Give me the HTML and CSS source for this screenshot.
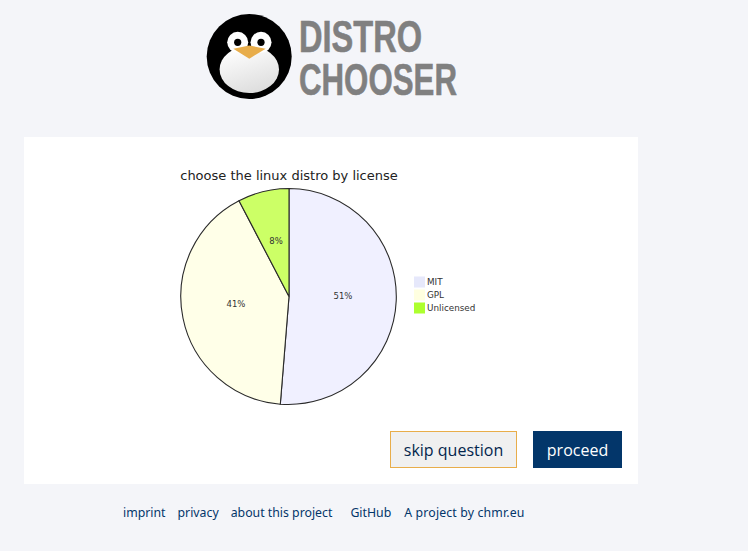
FILE: index.html
```html
<!DOCTYPE html>
<html lang="en">
<head>
    <meta charset="UTF-8">
    <title>Distro Chooser</title>
    <link rel="stylesheet" href="styles.css">
</head>
<body>
    <div class="page">
        <header class="logo-row">
            <div class="logo">
                <svg class="logo-icon" viewBox="0 0 98 100" width="98" height="100">
                    <defs>
                        <linearGradient id="belly" x1="0.3" y1="0" x2="0.7" y2="1">
                            <stop offset="0" stop-color="#ffffff"/>
                            <stop offset="1" stop-color="#dcdcdc"/>
                        </linearGradient>
                    </defs>
                    <circle cx="48.2" cy="56.5" r="42.5" fill="#000"/>
                    <ellipse cx="48.3" cy="69.5" rx="29.7" ry="23.5" fill="url(#belly)"/>
                    <circle cx="36.7" cy="42.3" r="10.5" fill="#fff"/>
                    <circle cx="60" cy="42.3" r="10.5" fill="#fff"/>
                    <circle cx="36.7" cy="42.3" r="3.6" fill="#000"/>
                    <circle cx="60" cy="42.3" r="3.6" fill="#000"/>
                    <polygon points="32.3,48.7 48.3,45.5 64.7,48.7 48.3,58.7" fill="#e8ad4a"/>
                </svg>
                <div class="logo-text">
                    <div class="logo-line logo-distro">DISTRO</div>
                    <div class="logo-line logo-chooser">CHOOSER</div>
                </div>
            </div>
        </header>

        <main class="card">
            <svg class="chart" viewBox="0 0 614 294" width="614" height="294">
                <text class="chart-title" x="265" y="42.5" text-anchor="middle">choose the linux distro by license</text>

                <path class="slice" d="M265 159.5 L265 51.5 A108 108 0 1 1 256.3 267.2 Z" fill="#f0f0ff"/>
                <path class="slice" d="M265 159.5 L256.3 267.2 A108 108 0 0 1 215 63.7 Z" fill="#ffffe8"/>
                <path class="slice" d="M265 159.5 L215 63.7 A108 108 0 0 1 265 51.5 Z" fill="#ccff66"/>

                <text class="pie-label" x="319" y="162" text-anchor="middle">51%</text>
                <text class="pie-label" x="212" y="170" text-anchor="middle">41%</text>
                <text class="pie-label" x="252" y="107" text-anchor="middle">8%</text>

                <rect x="390" y="139.5" width="11" height="11" fill="#e6e8fb"/>
                <rect x="390" y="152.5" width="11" height="11" fill="#ffffe0"/>
                <rect x="390" y="165.5" width="11" height="11" fill="#adff2f"/>
                <text class="legend-label" x="403" y="148">MIT</text>
                <text class="legend-label" x="403" y="161">GPL</text>
                <text class="legend-label" x="403" y="174">Unlicensed</text>
            </svg>

            <div class="actions">
                <button class="btn btn-skip">skip question</button>
                <button class="btn btn-proceed">proceed</button>
            </div>
        </main>

        <footer class="footer">
            <a href="#">imprint</a>
            <a href="#">privacy</a>
            <a href="#" class="about-link">about this project</a>
            <a href="#">GitHub</a>
            <a href="#" class="credit-link">A project by chmr.eu</a>
        </footer>
    </div>
</body>
</html>
```

FILE: styles.css
```css
body {
    margin: 0;
    background: #f4f5f9;
    font-family: "Noto Sans", "Open Sans", sans-serif;
    overflow: hidden;
}

.page {
    width: 614px;
    margin-left: 24px;
}

.logo-row {
    height: 137px;
    display: flex;
    justify-content: center;
}

.logo {
    display: flex;
    width: 260px;
    height: 100px;
}

.logo-icon {
    display: block;
    flex: none;
}

.logo-text {
    padding-top: 15px;
    width: 162px;
}

.logo-line {
    width: 230px;
    font-family: "Liberation Sans", sans-serif;
    font-size: 44px;
    line-height: 43px;
    font-weight: bold;
    color: #808080;
    -webkit-text-stroke: 0.6px #808080;
    transform-origin: left center;
}

.logo-distro {
    transform: scaleX(0.74);
}

.logo-chooser {
    transform: scaleX(0.71);
}

.card {
    background: #fff;
    height: 347px;
    display: flex;
    flex-direction: column;
}

.chart {
    display: block;
}

.chart-title {
    font-family: "DejaVu Sans", sans-serif;
    font-size: 13px;
    fill: #222;
}

.slice {
    stroke: #2a2a2a;
    stroke-width: 1.1;
}

.pie-label,
.legend-label {
    font-family: "DejaVu Sans", sans-serif;
    font-size: 8.5px;
    fill: #333;
}

.legend-label {
    font-size: 8.8px;
}

.actions {
    display: flex;
    justify-content: flex-end;
    gap: 16px;
    padding-right: 16px;
}

.btn {
    height: 37px;
    padding: 0;
    font-family: "Open Sans", sans-serif;
    font-size: 16px;
    cursor: pointer;
}

.btn-skip {
    width: 127px;
    background: #f0f0f0;
    border: 1px solid #e8ad4a;
    color: #03254c;
}

.btn-proceed {
    width: 89px;
    background: #03366a;
    border: none;
    color: #fff;
}

.footer {
    display: flex;
    gap: 12px;
    padding: 20px 0 0 99px;
    font-size: 12.3px;
    line-height: 18px;
}

.footer a {
    color: #03366a;
    text-decoration: none;
}

.about-link {
    margin-right: 6px;
}

.credit-link {
    margin-left: 1px;
    letter-spacing: 0.15px;
}
```
